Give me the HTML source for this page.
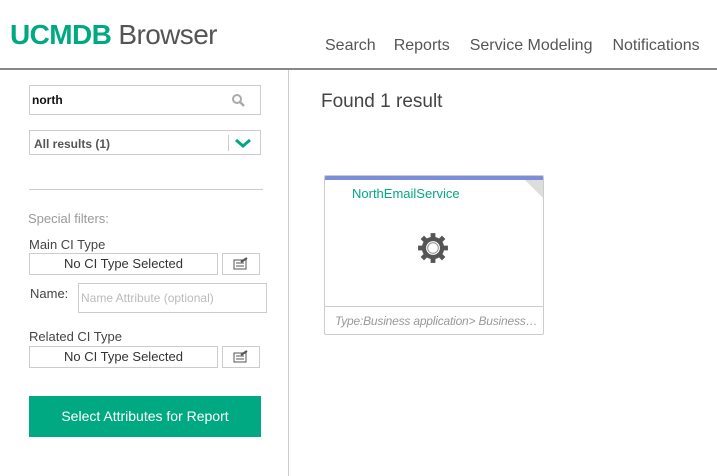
<!DOCTYPE html>
<html><head><style>
*{box-sizing:border-box;margin:0;padding:0}
body{width:717px;height:476px;background:#fff;font-family:"Liberation Sans",sans-serif;position:relative;overflow:hidden;color:#444}
.a{position:absolute}
.box{position:absolute;border:1px solid #ccc;background:#fff}
</style></head><body>
<div class="a" style="left:10px;top:19px;font-size:28px;line-height:32px;letter-spacing:-0.6px"><span style="color:#01a982;font-weight:bold">UCMDB</span><span style="color:#555"> Browser</span></div>
<div class="a" style="left:325px;top:37px;font-size:16px;color:#555;white-space:nowrap">Search<span style="margin-left:18px">Reports</span><span style="margin-left:20px">Service Modeling</span><span style="margin-left:20px">Notifications</span></div>
<div class="a" style="left:0;top:68px;width:717px;height:2px;background:#888"></div>
<div class="a" style="left:288px;top:70px;width:1px;height:406px;background:#ccc"></div>
<div class="box" style="left:29px;top:85px;width:232px;height:30px"></div>
<div class="a" style="left:32px;top:93px;font-size:12px;font-weight:bold;color:#111">north</div>
<svg class="a" style="left:231px;top:93px" width="15" height="15"><circle cx="6" cy="6" r="4" fill="none" stroke="#aaa" stroke-width="2"/><line x1="9" y1="9" x2="13" y2="13" stroke="#aaa" stroke-width="2.5"/></svg>
<div class="box" style="left:29px;top:130px;width:232px;height:25px"></div>
<div class="a" style="left:34px;top:137px;font-size:12px;font-weight:bold;color:#555">All results (1)</div>
<div class="a" style="left:228px;top:135px;width:1px;height:16px;background:#ccc"></div>
<svg class="a" style="left:234px;top:137px" width="18" height="12"><polyline points="2,3 9,9 16,3" fill="none" stroke="#01a982" stroke-width="3"/></svg>
<div class="a" style="left:29px;top:189px;width:234px;height:1px;background:#ccc"></div>
<div class="a" style="left:28px;top:211px;font-size:13px;color:#999">Special filters:</div>
<div class="a" style="left:29px;top:237px;font-size:13px;color:#444">Main CI Type</div>
<div class="box" style="left:29px;top:253px;width:189px;height:22px;text-align:center;font-size:13px;line-height:20px;color:#333">No CI Type Selected</div>
<div class="box" style="left:222px;top:253px;width:38px;height:22px"></div>
<svg class="a" style="left:233px;top:257px" width="16" height="14"><rect x="1" y="3" width="12" height="9" fill="none" stroke="#555"/><line x1="3" y1="6" x2="11" y2="6" stroke="#555"/><line x1="3" y1="9" x2="11" y2="9" stroke="#555"/><path d="M8 5 L14 1" stroke="#555" stroke-width="2"/></svg>
<div class="a" style="left:30px;top:286px;font-size:13px;color:#444">Name:</div>
<div class="box" style="left:78px;top:283px;width:189px;height:30px;font-size:12px;color:#bbb;padding:7px 2px">Name Attribute (optional)</div>
<div class="a" style="left:29px;top:329px;font-size:13px;color:#444">Related CI Type</div>
<div class="box" style="left:29px;top:346px;width:189px;height:22px;text-align:center;font-size:13px;line-height:20px;color:#333">No CI Type Selected</div>
<div class="box" style="left:222px;top:346px;width:38px;height:22px"></div>
<svg class="a" style="left:233px;top:350px" width="16" height="14"><rect x="1" y="3" width="12" height="9" fill="none" stroke="#555"/><line x1="3" y1="6" x2="11" y2="6" stroke="#555"/><line x1="3" y1="9" x2="11" y2="9" stroke="#555"/><path d="M8 5 L14 1" stroke="#555" stroke-width="2"/></svg>
<div class="a" style="left:29px;top:396px;width:232px;height:41px;background:#01a982;color:#fff;font-size:14px;text-align:center;line-height:41px">Select Attributes for Report</div>
<div class="a" style="left:321px;top:91px;font-size:19px;color:#444">Found 1 result</div>
<div class="box" style="left:324px;top:175px;width:220px;height:160px;border-color:#ccc;border-radius:2px;overflow:hidden">
<div style="position:absolute;left:0;top:0;right:0;height:4px;background:#7b8fd8"></div>
<div style="position:absolute;right:0;top:4px;width:0;height:0;border-top:18px solid #ddd;border-left:18px solid transparent"></div>
<div style="position:absolute;left:27px;top:10px;font-size:13px;color:#01a982">NorthEmailService</div>
<svg style="position:absolute;left:92px;top:56px" width="32" height="32" viewBox="0 0 30 30"><g fill="#555"><circle cx="15" cy="15" r="10.5"/><g stroke="#555" stroke-width="4.5"><line x1="15" y1="1" x2="15" y2="29"/><line x1="1" y1="15" x2="29" y2="15"/><line x1="5" y1="5" x2="25" y2="25"/><line x1="25" y1="5" x2="5" y2="25"/></g></g><circle cx="15" cy="15" r="6.5" fill="#fff"/><circle cx="15" cy="15" r="5" fill="none" stroke="#999" stroke-width="1"/></svg>
<div style="position:absolute;left:0;right:0;top:130px;height:1px;background:#ccc"></div>
<div style="position:absolute;left:10px;top:138px;width:208px;font-size:12px;font-style:italic;color:#999;white-space:nowrap;overflow:hidden;text-overflow:ellipsis;letter-spacing:-0.2px">Type:Business application&gt; BusinessApplication</div>
</div>
</body></html>
